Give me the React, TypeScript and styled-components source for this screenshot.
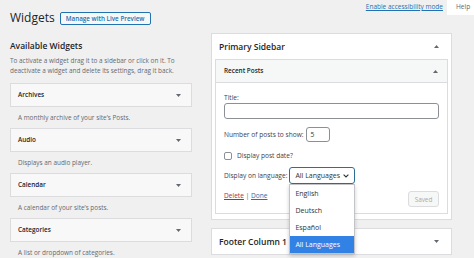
import React from "react";
import styled, { createGlobalStyle } from "styled-components";

const GlobalStyle = createGlobalStyle`
  html, body { margin: 0; padding: 0; }
  body {
    background: #f0f0f1;
    font-family: "Open Sans", "Noto Sans", sans-serif;
    color: #3c434a;
    font-size: 6.6px;
    line-height: 10px;
    overflow: hidden;
  }
  * { box-sizing: border-box; }
`;

const Page = styled.div`
  width: 474px;
  height: 258px;
  overflow: hidden;
`;

const TopBar = styled.header`
  display: flex;
  justify-content: space-between;
  align-items: flex-start;
  padding-left: 10px;
`;

const TitleGroup = styled.div`
  display: flex;
  align-items: center;
  gap: 5px;
  margin-top: 10px;
`;

const Title = styled.h1`
  margin: 0;
  font-size: 12px;
  line-height: 16px;
  font-weight: 400;
  color: #1d2327;
`;

const PreviewButton = styled.button`
  height: 13px;
  padding: 0 5px;
  border: 1px solid #2271b1;
  border-radius: 2px;
  background: #f6f7f7;
  color: #2271b1;
  font-family: inherit;
  font-size: 6.3px;
  font-weight: 600;
  line-height: 11px;
`;

const ScreenLinks = styled.div`
  display: flex;
  align-items: flex-start;
  gap: 4px;
`;

const A11yLink = styled.a`
  margin-top: 2px;
  font-size: 6.5px;
  line-height: 10px;
  color: #2271b1;
  text-decoration: underline;
`;

const HelpTab = styled.div`
  width: 27px;
  height: 15px;
  background: #fff;
  color: #646970;
  padding-left: 9px;
  line-height: 14px;
`;

const Columns = styled.main`
  display: flex;
  align-items: flex-start;
  gap: 19px;
  padding-left: 10px;
  margin-top: 7px;
`;

const LeftCol = styled.section`
  width: 182px;
  padding-top: 7px;
`;

const SectionTitle = styled.h2`
  margin: 0;
  font-size: 8.5px;
  line-height: 12px;
  font-weight: 600;
  color: #1d2327;
`;

const Intro = styled.p`
  margin: 4px 0 0;
  font-size: 6.4px;
  color: #646970;
  line-height: 10px;
  white-space: nowrap;
`;

const WidgetList = styled.div`
  margin-top: 7px;
  display: flex;
  flex-direction: column;
  gap: 5px;
`;

const WidgetItem = styled.div`
  display: flex;
  flex-direction: column;
  gap: 6px;
`;

const WidgetBox = styled.div`
  height: 24px;
  border: 1px solid #dcdcde;
  background: #f8f8f8;
  display: flex;
  align-items: center;
  justify-content: space-between;
  padding: 0 10px 0 7px;
  font-size: 6.4px;
  font-weight: 600;
  color: #1d2327;
`;

const WidgetDesc = styled.div`
  padding-left: 8px;
  font-size: 6.4px;
  color: #646970;
  line-height: 10px;
`;

const RightCol = styled.section`
  width: 241px;
  display: flex;
  flex-direction: column;
  gap: 8px;
`;

const SidebarPanel = styled.div`
  background: #fff;
  border: 1px solid #dcdcde;
`;

const PanelHeader = styled.div`
  height: 25px;
  display: flex;
  align-items: center;
  justify-content: space-between;
  padding: 0 12px 0 7px;
`;

const PanelTitle = styled.h3`
  margin: 0;
  font-size: 8.5px;
  line-height: 12px;
  font-weight: 600;
  color: #1d2327;
`;

const PanelBody = styled.div`
  padding: 0 3px 5px;
`;

const Widget = styled.div`
  border: 1px solid #dcdcde;
  background: #fff;
`;

const WidgetTop = styled.div`
  height: 23px;
  border-bottom: 1px solid #dcdcde;
  background: #f6f7f7;
  display: flex;
  align-items: center;
  justify-content: space-between;
  padding: 0 9px 0 8px;
  font-size: 6.4px;
  font-weight: 600;
  color: #1d2327;
`;

const WidgetInside = styled.div`
  padding: 10px 8px 6px 8px;
  display: flex;
  flex-direction: column;
`;

const FieldLabel = styled.label`
  display: block;
  line-height: 10px;
  color: #3c434a;
  white-space: nowrap;
`;

const TextInput = styled.div`
  height: 16px;
  width: 100%;
  border: 1px solid #8c8f94;
  border-radius: 3px;
  background: #fff;
`;

const Row = styled.div<{ $top: number }>`
  display: flex;
  align-items: center;
  margin-top: ${(p) => p.$top}px;
`;

const NumberInput = styled.div`
  margin-left: 2px;
  width: 24px;
  height: 15px;
  border: 1px solid #8c8f94;
  border-radius: 3px;
  padding-left: 4px;
  line-height: 13px;
  color: #2c3338;
`;

const Checkbox = styled.span`
  width: 8px;
  height: 8px;
  border: 1px solid #8c8f94;
  border-radius: 2px;
  background: #fff;
  margin-right: 5px;
`;

const SelectWrap = styled.div`
  position: relative;
  margin-left: 2px;
`;

const Select = styled.div`
  width: 66px;
  height: 17px;
  border: 1px solid #2c6e96;
  border-radius: 3px;
  background: #fff;
  display: flex;
  align-items: center;
  justify-content: space-between;
  padding: 0 5px 0 5px;
  font-size: 7px;
  color: #2c3338;
`;

const Dropdown = styled.ul`
  position: absolute;
  top: 100%;
  left: 0;
  width: 66px;
  margin: 0;
  padding: 0;
  list-style: none;
  background: #fff;
  border: 1px solid #c3c4c7;
  box-shadow: 0 2px 4px rgba(0, 0, 0, 0.2);
  z-index: 5;
`;

const Option = styled.li<{ $selected?: boolean }>`
  height: 17px;
  line-height: 17px;
  padding-left: 5px;
  font-size: 7px;
  color: ${(p) => (p.$selected ? "#fff" : "#2c3338")};
  background: ${(p) => (p.$selected ? "#3282e6" : "#fff")};
`;

const Actions = styled.div`
  margin-top: 7px;
  display: flex;
  justify-content: space-between;
  align-items: flex-start;
`;

const LinkGroup = styled.div`
  line-height: 10px;
  color: #646970;
`;

const ActionLink = styled.a<{ $danger?: boolean }>`
  color: ${(p) => (p.$danger ? "#b32d2e" : "#2271b1")};
  text-decoration: underline;
`;

const SavedButton = styled.button`
  width: 31px;
  height: 16px;
  border: 1px solid #dcdcde;
  border-radius: 3px;
  background: #f6f7f7;
  color: #a7aaad;
  font-family: inherit;
  font-size: 6.4px;
  padding: 0;
`;

const Arrow = ({ up }: { up?: boolean }) => (
  <svg width="5" height="3" viewBox="0 0 5 3" aria-hidden>
    <polygon points={up ? "0,3 2.5,0 5,3" : "0,0 5,0 2.5,3"} fill="#646970" />
  </svg>
);

const Chevron = () => (
  <svg width="6" height="4" viewBox="0 0 6 4" aria-hidden>
    <polyline points="0.6,0.7 3,3 5.4,0.7" fill="none" stroke="#2c3338" strokeWidth="1.1" />
  </svg>
);

const widgets = [
  { name: "Archives", desc: "A monthly archive of your site\u2019s Posts." },
  { name: "Audio", desc: "Displays an audio player." },
  { name: "Calendar", desc: "A calendar of your site\u2019s posts." },
  { name: "Categories", desc: "A list or dropdown of categories." },
];

const languages = ["English", "Deutsch", "Espa\u00f1ol", "All Languages"];

export default function App() {
  return (
    <Page>
      <GlobalStyle />
      <TopBar>
        <TitleGroup>
          <Title>Widgets</Title>
          <PreviewButton>Manage with Live Preview</PreviewButton>
        </TitleGroup>
        <ScreenLinks>
          <A11yLink>Enable accessibility mode</A11yLink>
          <HelpTab>Help</HelpTab>
        </ScreenLinks>
      </TopBar>
      <Columns>
        <LeftCol>
          <SectionTitle>Available Widgets</SectionTitle>
          <Intro>
            To activate a widget drag it to a sidebar or click on it. To
            <br />
            deactivate a widget and delete its settings, drag it back.
          </Intro>
          <WidgetList>
            {widgets.map((w) => (
              <WidgetItem key={w.name}>
                <WidgetBox>
                  <span>{w.name}</span>
                  <Arrow />
                </WidgetBox>
                <WidgetDesc>{w.desc}</WidgetDesc>
              </WidgetItem>
            ))}
          </WidgetList>
        </LeftCol>
        <RightCol>
          <SidebarPanel>
            <PanelHeader>
              <PanelTitle>Primary Sidebar</PanelTitle>
              <Arrow up />
            </PanelHeader>
            <PanelBody>
              <Widget>
                <WidgetTop>
                  <span>Recent Posts</span>
                  <Arrow up />
                </WidgetTop>
                <WidgetInside>
                  <FieldLabel>Title:</FieldLabel>
                  <TextInput />
                  <Row $top={8}>
                    <FieldLabel>Number of posts to show:</FieldLabel>
                    <NumberInput>5</NumberInput>
                  </Row>
                  <Row $top={9}>
                    <Checkbox />
                    <FieldLabel>Display post date?</FieldLabel>
                  </Row>
                  <Row $top={6}>
                    <FieldLabel>Display on language:</FieldLabel>
                    <SelectWrap>
                      <Select>
                        <span>All Languages</span>
                        <Chevron />
                      </Select>
                      <Dropdown>
                        {languages.map((l) => (
                          <Option key={l} $selected={l === "All Languages"}>
                            {l}
                          </Option>
                        ))}
                      </Dropdown>
                    </SelectWrap>
                  </Row>
                  <Actions>
                    <LinkGroup>
                      <ActionLink $danger>Delete</ActionLink> | <ActionLink>Done</ActionLink>
                    </LinkGroup>
                    <SavedButton>Saved</SavedButton>
                  </Actions>
                </WidgetInside>
              </Widget>
            </PanelBody>
          </SidebarPanel>
          <SidebarPanel>
            <PanelHeader>
              <PanelTitle>Footer Column 1</PanelTitle>
              <Arrow />
            </PanelHeader>
          </SidebarPanel>
        </RightCol>
      </Columns>
    </Page>
  );
}
